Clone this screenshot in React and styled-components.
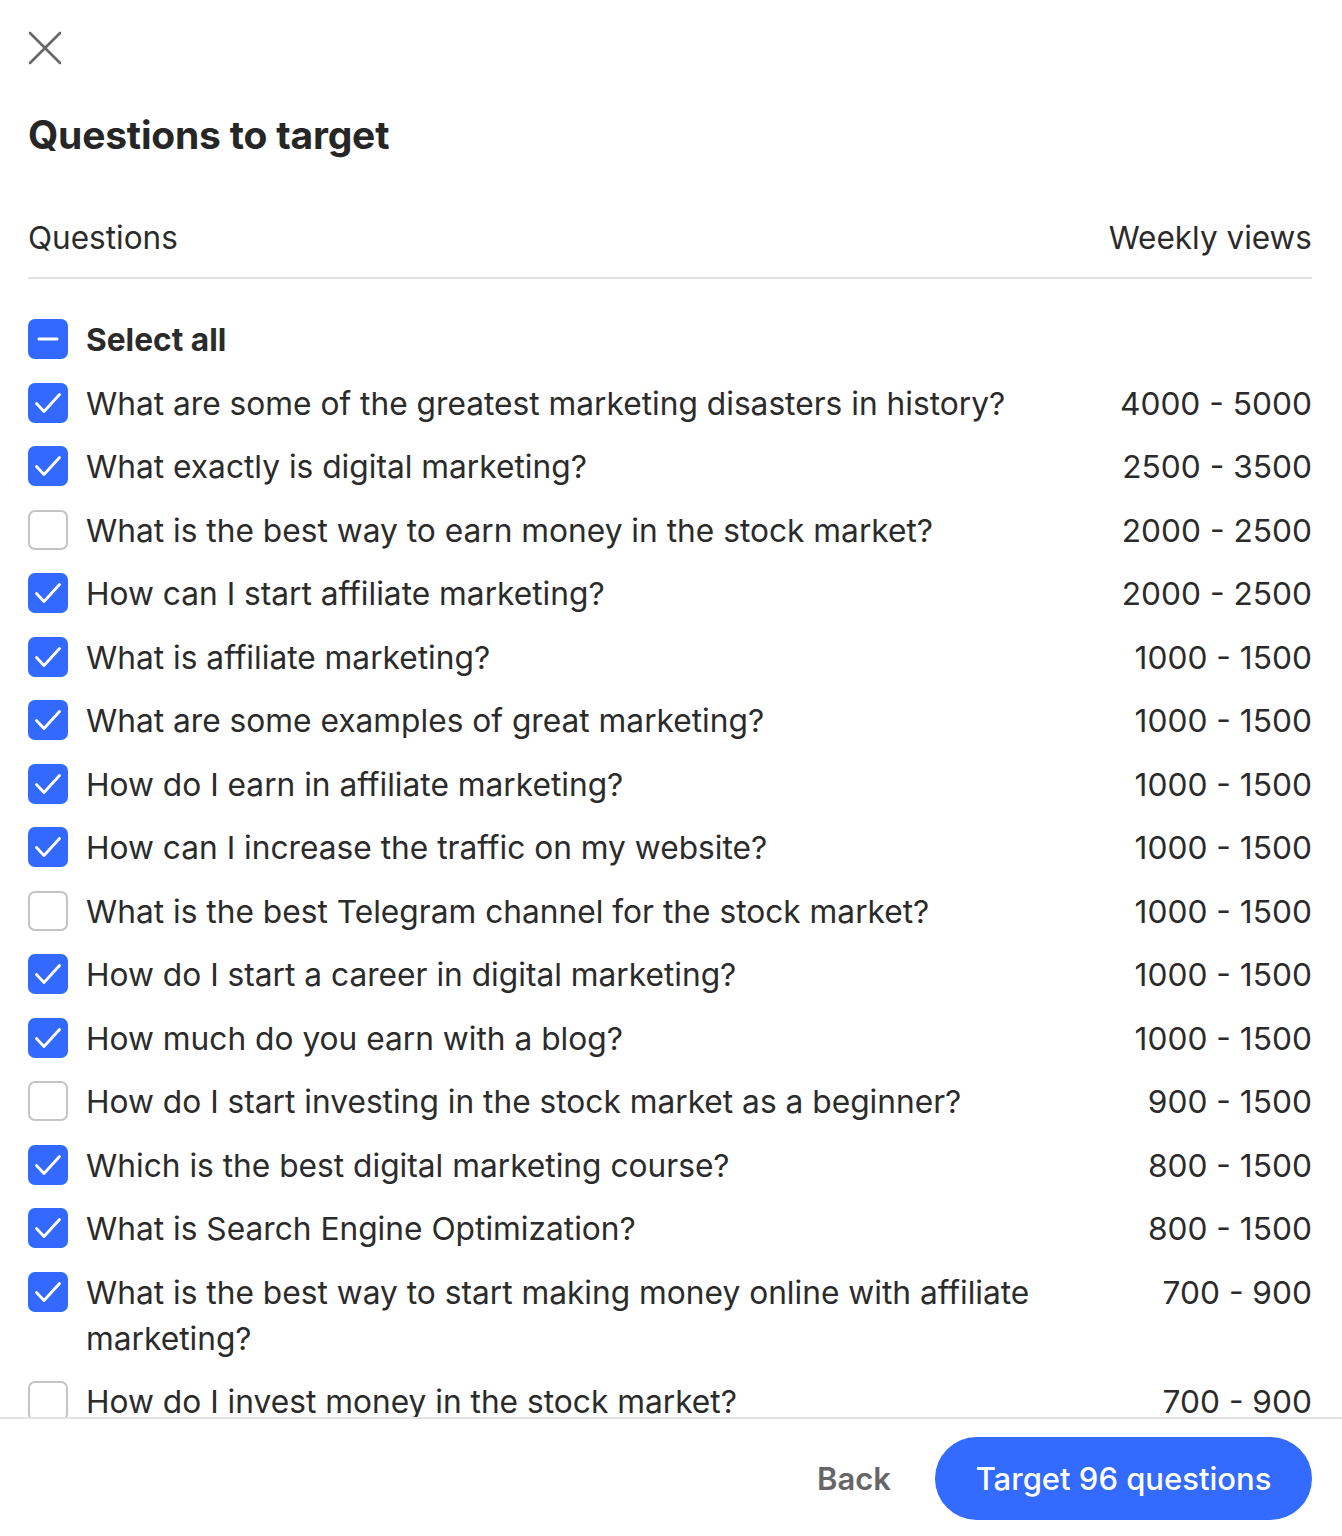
import React, { useState } from "react";
import styled, { createGlobalStyle } from "styled-components";

const GlobalStyle = createGlobalStyle`
  html, body {
    margin: 0;
    padding: 0;
    background: #ffffff;
  }
  body {
    font-family: Inter, "Noto Sans", "Liberation Sans", sans-serif;
    color: #2b2b2b;
  }
`;

const QUESTIONS = [
  { text: "What are some of the greatest marketing disasters in history?", views: "4000 - 5000", checked: true },
  { text: "What exactly is digital marketing?", views: "2500 - 3500", checked: true },
  { text: "What is the best way to earn money in the stock market?", views: "2000 - 2500", checked: false },
  { text: "How can I start affiliate marketing?", views: "2000 - 2500", checked: true },
  { text: "What is affiliate marketing?", views: "1000 - 1500", checked: true },
  { text: "What are some examples of great marketing?", views: "1000 - 1500", checked: true },
  { text: "How do I earn in affiliate marketing?", views: "1000 - 1500", checked: true },
  { text: "How can I increase the traffic on my website?", views: "1000 - 1500", checked: true },
  { text: "What is the best Telegram channel for the stock market?", views: "1000 - 1500", checked: false },
  { text: "How do I start a career in digital marketing?", views: "1000 - 1500", checked: true },
  { text: "How much do you earn with a blog?", views: "1000 - 1500", checked: true },
  { text: "How do I start investing in the stock market as a beginner?", views: "900 - 1500", checked: false },
  { text: "Which is the best digital marketing course?", views: "800 - 1500", checked: true },
  { text: "What is Search Engine Optimization?", views: "800 - 1500", checked: true },
  { text: "What is the best way to start making money online with affiliate marketing?", views: "700 - 900", checked: true },
  { text: "How do I invest money in the stock market?", views: "700 - 900", checked: false },
];

const Page = styled.div`
  height: 1536px;
  display: flex;
  flex-direction: column;
  overflow: hidden;
`;

const Top = styled.div`
  padding: 30px 30px 0 27px;
  display: flex;
  flex-direction: column;
`;

const CloseButton = styled.button`
  width: 36px;
  height: 36px;
  padding: 0;
  margin: 0;
  border: none;
  background: transparent;
  display: flex;
  align-items: center;
  justify-content: center;
  cursor: pointer;
`;

const Title = styled.h1`
  margin: 46px 0 0 1px;
  font-size: 39px;
  line-height: 46px;
  font-weight: 700;
  color: #262626;
  letter-spacing: -0.2px;
`;

const HeaderRow = styled.div`
  margin: 57px 0 0 1px;
  display: flex;
  justify-content: space-between;
  align-items: center;
  font-size: 31.5px;
  line-height: 46px;
  color: #2b2b2b;
  padding-bottom: 16px;
  border-bottom: 2px solid #e3e3e3;
`;

const List = styled.div`
  flex: 1;
  min-height: 0;
  overflow: hidden;
  padding: 38px 30px 0 28px;
  display: flex;
  flex-direction: column;
  gap: 17.5px;
`;

const Row = styled.label`
  flex: 0 0 auto;
  display: flex;
  align-items: flex-start;
  gap: 18px;
  font-size: 31.7px;
  line-height: 46px;
  font-weight: ${(p) => (p.$bold ? 700 : 400)};
  color: #2b2b2b;
  cursor: pointer;
`;

const Box = styled.span`
  flex: 0 0 auto;
  width: 40px;
  height: 40px;
  margin-top: 2px;
  box-sizing: border-box;
  border-radius: 7px;
  background: ${(p) => (p.$on ? "#3369ff" : "#ffffff")};
  border: ${(p) => (p.$on ? "none" : "2px solid #c4c4c4")};
  display: flex;
  align-items: center;
  justify-content: center;
`;

const QuestionText = styled.span`
  flex: 1;
  padding-right: 40px;
`;

const Views = styled.span`
  flex: 0 0 auto;
  text-align: right;
`;

const Footer = styled.div`
  flex: 0 0 auto;
  border-top: 2px solid #e3e3e3;
  padding: 18px 30px 16px 0;
  display: flex;
  justify-content: flex-end;
  align-items: center;
  gap: 44px;
`;

const BackButton = styled.button`
  border: none;
  background: transparent;
  font-family: inherit;
  font-size: 31px;
  font-weight: 600;
  color: #666666;
  padding: 0;
  cursor: pointer;
`;

const PrimaryButton = styled.button`
  border: none;
  background: #336aff;
  color: #ffffff;
  font-family: inherit;
  font-size: 31px;
  font-weight: 500;
  height: 83px;
  width: 377px;
  border-radius: 42px;
  cursor: pointer;
`;

const CheckIcon = () => (
  <svg width="40" height="40" viewBox="0 0 40 40" fill="none">
    <polyline
      points="8.5,20.5 16,28.5 31.5,11.5"
      stroke="#ffffff"
      strokeWidth="2.8"
      strokeLinecap="round"
      strokeLinejoin="round"
    />
  </svg>
);

const MinusIcon = () => (
  <svg width="40" height="40" viewBox="0 0 40 40" fill="none">
    <line x1="11" y1="20" x2="29" y2="20" stroke="#ffffff" strokeWidth="3" strokeLinecap="round" />
  </svg>
);

const CloseIcon = () => (
  <svg width="34" height="34" viewBox="0 0 34 34" fill="none">
    <path d="M2 2 L32 32 M32 2 L2 32" stroke="#666666" strokeWidth="2.6" strokeLinecap="round" />
  </svg>
);

const App = () => {
  const [items, setItems] = useState(QUESTIONS);

  const toggle = (i) => {
    setItems(items.map((q, j) => (j === i ? { ...q, checked: !q.checked } : q)));
  };

  return (
    <Page>
      <GlobalStyle />
      <Top>
        <CloseButton aria-label="Close">
          <CloseIcon />
        </CloseButton>
        <Title>Questions to target</Title>
        <HeaderRow>
          <span>Questions</span>
          <span>Weekly views</span>
        </HeaderRow>
      </Top>
      <List>
        <Row $bold>
          <Box $on>
            <MinusIcon />
          </Box>
          <QuestionText>Select all</QuestionText>
        </Row>
        {items.map((q, i) => (
          <Row key={i} onClick={() => toggle(i)}>
            <Box $on={q.checked}>{q.checked && <CheckIcon />}</Box>
            <QuestionText>{q.text}</QuestionText>
            <Views>{q.views}</Views>
          </Row>
        ))}
      </List>
      <Footer>
        <BackButton>Back</BackButton>
        <PrimaryButton>Target 96 questions</PrimaryButton>
      </Footer>
    </Page>
  );
};

export default App;
